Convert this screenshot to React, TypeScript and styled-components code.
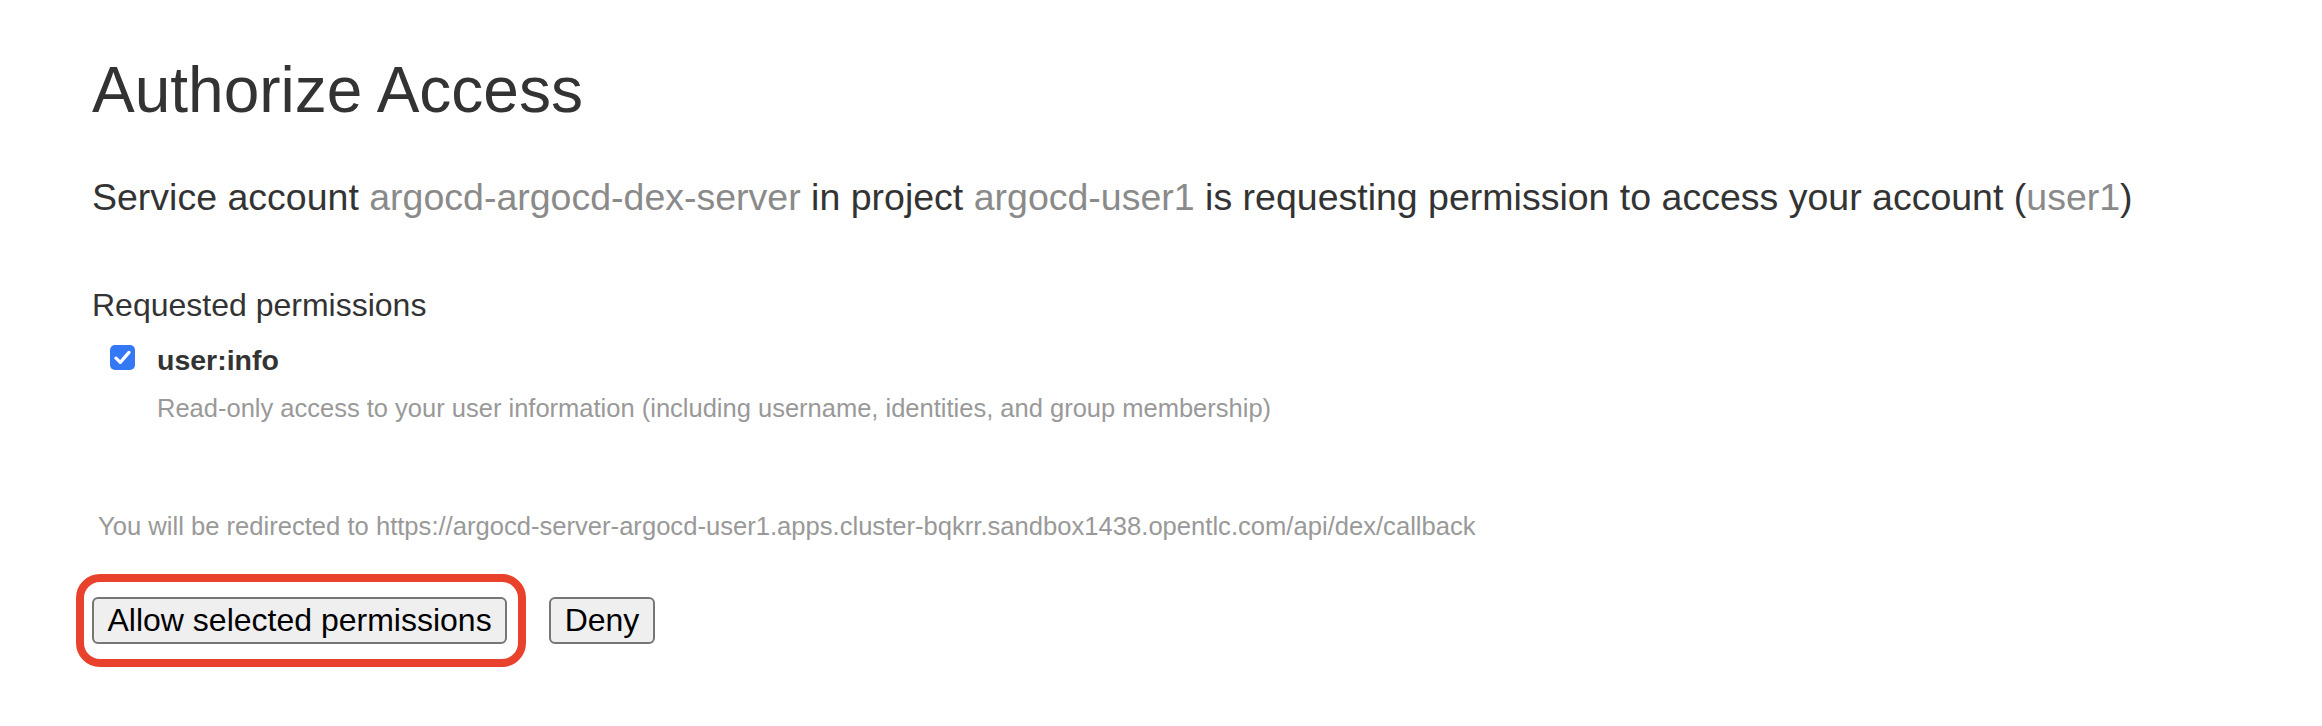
import React from "react";
import styled, { createGlobalStyle } from "styled-components";

const GlobalStyle = createGlobalStyle`
  html, body {
    margin: 0;
    padding: 0;
    background: #fff;
  }
  body {
    font-family: "Liberation Sans", Arial, Helvetica, sans-serif;
    color: #333;
  }
`;

const Page = styled.div`
  box-sizing: border-box;
  min-height: 726px;
  padding: 54px 0 0 92px;
  display: flex;
  flex-direction: column;
  align-items: flex-start;
`;

const Heading = styled.h1`
  margin: 0;
  font-size: 64px;
  line-height: 72px;
  font-weight: 400;
  color: #333;
`;

const Lead = styled.p`
  margin: 49px 0 0;
  font-size: 37.5px;
  line-height: 45px;
  white-space: nowrap;
`;

const Muted = styled.span`
  color: #8a8a8a;
`;

const SectionTitle = styled.div`
  margin-top: 66px;
  font-size: 32px;
  line-height: 38px;
`;

const ScopeRow = styled.label`
  margin-top: 19px;
  display: flex;
  align-items: flex-start;
  gap: 22px;
  padding-left: 18px;
`;

const Check = styled.span`
  width: 25px;
  height: 25px;
  margin-top: 2px;
  border-radius: 5px;
  background: #3478f6;
  display: flex;
  align-items: center;
  justify-content: center;
  flex: none;
`;

const ScopeText = styled.div`
  display: flex;
  flex-direction: column;
`;

const ScopeName = styled.div`
  font-size: 28.5px;
  line-height: 34px;
  font-weight: 700;
  color: #333;
`;

const ScopeDesc = styled.div`
  margin-top: 16px;
  font-size: 25.5px;
  line-height: 30px;
  color: #999;
  white-space: nowrap;
`;

const Redirect = styled.div`
  margin-top: 88px;
  margin-left: 6px;
  font-size: 25.6px;
  line-height: 30px;
  color: #999;
  white-space: nowrap;
`;

const Actions = styled.div`
  margin-top: 56px;
  display: flex;
  gap: 42px;
`;

const Highlight = styled.div`
  position: relative;
  display: flex;
`;

const Ring = styled.span`
  position: absolute;
  top: -23px;
  bottom: -23px;
  left: -16px;
  right: -19px;
  border: 8px solid #e8422d;
  border-radius: 24px;
  pointer-events: none;
`;

const Button = styled.button`
  box-sizing: border-box;
  height: 47px;
  padding: 0 13.5px;
  font-family: "Liberation Sans", Arial, Helvetica, sans-serif;
  font-size: 32px;
  color: #000;
  background: #efefef;
  border: 2px solid #767676;
  border-radius: 6px;
  cursor: pointer;
`;

const CheckMark = () => (
  <svg width="17" height="15" viewBox="0 0 17 15">
    <path
      d="M2 8.2 L6.3 12.4 L15 2.4"
      fill="none"
      stroke="#fff"
      strokeWidth="3.2"
      strokeLinecap="round"
      strokeLinejoin="round"
    />
  </svg>
);

export default function App() {
  return (
    <>
      <GlobalStyle />
      <Page>
        <Heading>Authorize Access</Heading>
        <Lead>
          Service account <Muted>argocd-argocd-dex-server</Muted> in project{" "}
          <Muted>argocd-user1</Muted> is requesting permission to access your
          account (<Muted>user1</Muted>)
        </Lead>
        <SectionTitle>Requested permissions</SectionTitle>
        <ScopeRow>
          <Check>
            <CheckMark />
          </Check>
          <ScopeText>
            <ScopeName>user:info</ScopeName>
            <ScopeDesc>
              Read-only access to your user information (including username,
              identities, and group membership)
            </ScopeDesc>
          </ScopeText>
        </ScopeRow>
        <Redirect>
          You will be redirected to
          https://argocd-server-argocd-user1.apps.cluster-bqkrr.sandbox1438.opentlc.com/api/dex/callback
        </Redirect>
        <Actions>
          <Highlight>
            <Button>Allow selected permissions</Button>
            <Ring />
          </Highlight>
          <Button>Deny</Button>
        </Actions>
      </Page>
    </>
  );
}
